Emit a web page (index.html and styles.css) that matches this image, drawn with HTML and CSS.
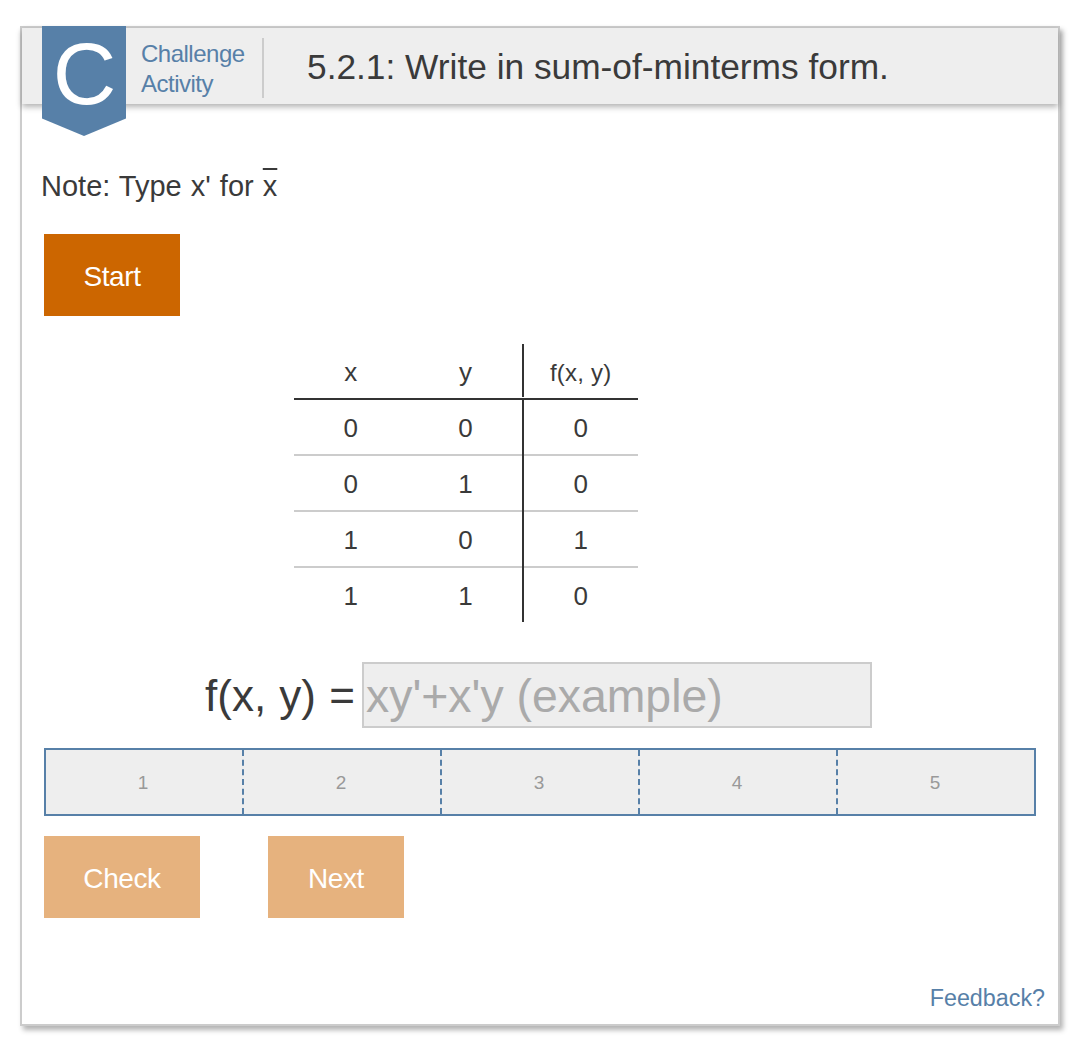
FILE: index.html
```html
<!DOCTYPE html>
<html lang="en">

<head>
    <meta charset="UTF-8">
    <title>Challenge Activity 5.2.1</title>
    <link rel="stylesheet" href="styles.css">
</head>

<body>

    <div class="card">
        <div class="header">
            <div class="ribbon">C</div>
            <div class="activity-label">Challenge<br>Activity</div>
            <div class="title">5.2.1: Write in sum-of-minterms form.</div>
        </div>

        <div class="content">
            <p class="note">Note: Type x' for <span class="overbar">x</span></p>

            <button class="btn start">Start</button>

            <table class="truth-table">
                <thead>
                    <tr><th>x</th><th>y</th><th class="output">f(x, y)</th></tr>
                </thead>
                <tbody>
                    <tr><td>0</td><td>0</td><td class="output">0</td></tr>
                    <tr><td>0</td><td>1</td><td class="output">0</td></tr>
                    <tr><td>1</td><td>0</td><td class="output">1</td></tr>
                    <tr><td>1</td><td>1</td><td class="output">0</td></tr>
                </tbody>
            </table>

            <div class="expression">
                <span class="expression-label">f(x, y) =</span>
                <input class="expression-input" type="text" placeholder="xy'+x'y (example)" disabled>
            </div>

            <div class="levels">
                <div class="level">1</div>
                <div class="level">2</div>
                <div class="level">3</div>
                <div class="level">4</div>
                <div class="level">5</div>
            </div>

            <div class="actions">
                <button class="btn muted check">Check</button>
                <button class="btn muted next">Next</button>
            </div>
        </div>

        <a class="feedback" href="#">Feedback?</a>
    </div>

</body>

</html>
```

FILE: styles.css
```css
* {
    box-sizing: border-box;
}

body {
    margin: 0;
    padding: 26px 0 26px 20px;
    background-color: white;
    font-family: "Liberation Sans", Arial, sans-serif;
    color: #3a3a3a;
}

.card {
    position: relative;
    width: 1040px;
    height: 1000px;
    border: 2px solid #ccc;
    background-color: white;
    box-shadow: 3px 4px 5px rgba(0, 0, 0, 0.3);
}

.header {
    display: flex;
    align-items: center;
    height: 76px;
    background-color: #eee;
    box-shadow: 0 3px 6px rgba(0, 0, 0, 0.3);
}

.ribbon {
    align-self: flex-start;
    width: 84px;
    height: 110px;
    margin: -2px 0 -36px 20px;
    padding: 3px 0 0 1px;
    background-color: #5780a8;
    color: white;
    font-size: 88px;
    line-height: 90px;
    text-align: center;
    clip-path: polygon(0 0, 100% 0, 100% 84%, 50% 100%, 0 84%);
}

.activity-label {
    width: 138px;
    height: 60px;
    margin-top: 4px;
    padding: 1px 0 0 15px;
    border-right: 2px solid #ccc;
    color: #5780a8;
    font-size: 24px;
    line-height: 30px;
    letter-spacing: -0.5px;
}

.title {
    margin: 1px 0 0 43px;
    font-size: 35.3px;
}

.content {
    padding: 0 22px;
}

.note {
    margin: 62px 0 0 -3px;
    height: 40px;
    font-size: 29px;
    line-height: 40px;
    word-spacing: 1px;
}

.overbar {
    text-decoration: overline;
}

.btn {
    display: block;
    height: 82px;
    padding-top: 5px;
    border: none;
    color: white;
    font-family: inherit;
    font-size: 28px;
    letter-spacing: -0.4px;
}

.start {
    width: 136px;
    margin-top: 28px;
    background-color: #cc6600;
}

.truth-table {
    width: 344px;
    margin: 28px 0 0 250px;
    border-collapse: collapse;
    table-layout: fixed;
    font-size: 26px;
}

.truth-table th {
    height: 55px;
    padding: 3px 1px 0 0;
    border-bottom: 2px solid #333;
    font-weight: normal;
}

.truth-table th.output {
    padding-right: 0;
    font-size: 24px;
    letter-spacing: 0.2px;
}

.truth-table td {
    height: 56px;
    padding: 2px 1px 0 0;
    border-bottom: 2px solid #ccc;
    text-align: center;
}

.truth-table td.output {
    padding-right: 0;
}

.truth-table tr:last-child td {
    border-bottom: none;
}

/* the rule runs over the row lines, so it is drawn on top of them */
.truth-table .output {
    position: relative;
}

.truth-table .output::before {
    content: "";
    position: absolute;
    top: 0;
    bottom: -2px;
    left: -1px;
    width: 2px;
    background-color: #333;
}

.truth-table tr:last-child .output::before {
    bottom: 1px;
}

.expression {
    display: flex;
    align-items: center;
    height: 66px;
    margin-top: 39px;
    padding-left: 161px;
}

.expression-label {
    width: 157px;
    padding-top: 2px;
    font-size: 44px;
    word-spacing: 1px;
}

.expression-input {
    width: 510px;
    height: 66px;
    padding: 2px 2px 0;
    border: 2px solid #ccc;
    background-color: #eee;
    font-family: inherit;
    font-size: 46.4px;
}

.expression-input::placeholder {
    color: #aaa;
    opacity: 1;
}

.levels {
    display: flex;
    width: 992px;
    height: 68px;
    margin-top: 20px;
    border: 2px solid #5780a8;
    background-color: #eee;
}

.level {
    flex: 1;
    display: flex;
    align-items: center;
    justify-content: center;
    padding: 2px 2px 0 0;
    border-right: 2px dashed #5780a8;
    color: #999;
    font-size: 19px;
}

.level:last-child {
    border-right: none;
}

.actions {
    display: flex;
    gap: 68px;
    margin-top: 20px;
}

.muted {
    background-color: #e6b27e;
}

.check {
    width: 156px;
}

.next {
    width: 136px;
}

.feedback {
    position: absolute;
    right: 13px;
    bottom: 12px;
    color: #5780a8;
    font-size: 23.3px;
    text-decoration: none;
}
```
